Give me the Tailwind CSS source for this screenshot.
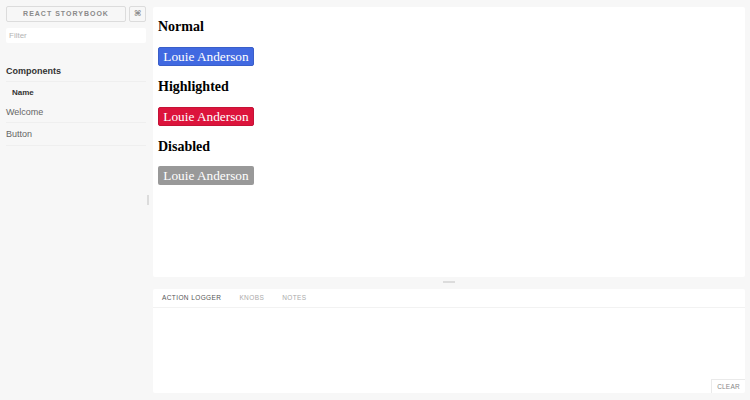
<!DOCTYPE html>
<html lang="en">
<head>
  <meta charset="UTF-8" />
  <title>React Storybook</title>
  <script src="https://cdn.jsdelivr.net/npm/@tailwindcss/browser@4"></script>
</head>
<body class="bg-[#f7f7f7] w-[750px] h-[400px] overflow-hidden flex font-['Liberation_Sans',sans-serif]">
  <!-- sidebar -->
  <aside class="relative w-[153px] h-full shrink-0 pl-[6px] pr-[7px] pt-[6px]">
    <div class="flex gap-[3px] h-4">
      <div class="w-[120px] border border-[#dcdcdc] rounded-[2px] flex items-center justify-center text-[7px] font-bold tracking-[1px] text-[#8a8a8a]">REACT STORYBOOK</div>
      <div class="w-[17px] border border-[#dcdcdc] rounded-[2px] flex items-center justify-center text-[8px] font-bold text-[#8a8a8a] font-['DejaVu_Sans',sans-serif]">⌘</div>
    </div>
    <div class="mt-[6px] h-[15px] bg-white rounded-[2px] pl-[3px] flex items-center text-[8px] text-[#b4b4b4] leading-none">Filter</div>
    <div class="mt-[22px] h-[17px] border-b border-[#efefef] text-[9px] font-bold text-[#333] leading-3">Components</div>
    <div class="h-[21px] pl-[6px] flex items-center text-[8px] font-bold text-[#333]">Name</div>
    <div class="h-[20px] border-b border-[#efefef] flex items-center text-[9px] text-[#666]">Welcome</div>
    <div class="h-[23px] pt-[1px] border-b border-[#efefef] flex items-center text-[9px] text-[#666]">Button</div>
    <div class="absolute left-[147px] top-[195px] w-[2px] h-[10px] bg-[#dcdcdc]"></div>
  </aside>

  <main class="relative w-[592px] h-full pt-[7px] flex flex-col">
    <!-- preview -->
    <section class="h-[270px] bg-white rounded-[2px] pl-[5px] font-['Liberation_Serif',serif] text-black">
      <h3 class="text-[14px] font-bold leading-[18px] pt-[11px]">Normal</h3>
      <button class="block mt-[11px] w-[96px] h-[19px] bg-[#4169e1] border border-[#3a5ec9] rounded-[2px] text-white text-[13.3px] leading-none whitespace-nowrap">Louie Anderson</button>
      <h3 class="text-[14px] font-bold leading-[18px] mt-[12px]">Highlighted</h3>
      <button class="block mt-[11px] w-[96px] h-[19px] bg-[#dc143c] border border-[#c51236] rounded-[2px] text-white text-[13.3px] leading-none whitespace-nowrap">Louie Anderson</button>
      <h3 class="text-[14px] font-bold leading-[18px] mt-[12px]">Disabled</h3>
      <button class="block mt-[10px] w-[96px] h-[19px] bg-[#999] rounded-[2px] text-white text-[13.3px] leading-none whitespace-nowrap">Louie Anderson</button>
    </section>
    <div class="h-3 pb-[2px] flex items-center justify-center">
      <div class="w-3 h-[2px] bg-[#dcdcdc]"></div>
    </div>
    <!-- addon panel -->
    <section class="relative h-[104px] bg-white rounded-[2px] flex flex-col">
      <div class="h-[19px] border-b border-[#f2f2f2] flex items-center pl-[9px] gap-[18px] text-[6.5px] tracking-[0.4px]">
        <span class="text-[#555]">ACTION LOGGER</span>
        <span class="text-[#aaa]">KNOBS</span>
        <span class="text-[#aaa]">NOTES</span>
      </div>
      <div class="absolute right-0 bottom-0 w-[34px] h-[14px] border-t border-l border-[#eaeaea] flex items-center justify-center text-[6.5px] tracking-[0.2px] text-[#888]">CLEAR</div>
    </section>
  </main>
</body>
</html>
